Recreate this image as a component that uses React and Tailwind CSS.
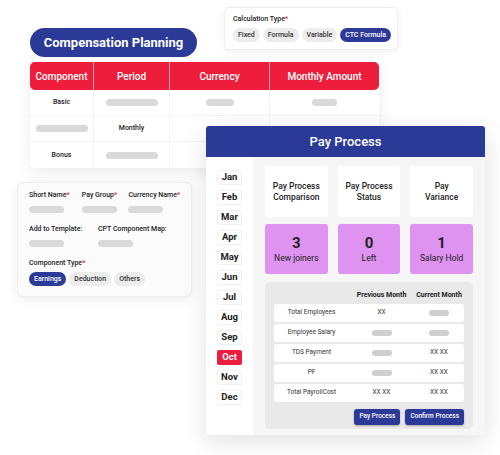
import React from "react";

const Bar = ({ w = "w-[52px]" }) => (
  <div className={`h-[7px] ${w} rounded-full bg-[#d9d9d9]`} />
);

const Chip = ({ children, active }) => (
  <div
    className={`h-[14px] px-[5px] rounded-full flex items-center whitespace-nowrap text-[7px] font-medium ${
      active ? "bg-[#2b3a97] text-white" : "bg-[#ececec] text-[#333]"
    }`}
  >
    {children}
  </div>
);

const Req = () => <span className="text-[#ee1d3c]">*</span>;

const months = ["Jan","Feb","Mar","Apr","May","Jun","Jul","Aug","Sep","Oct","Nov","Dec"];

export default function App() {
  return (
    <div
      className="relative w-[500px] h-[455px] bg-white overflow-hidden"
      style={{ fontFamily: "Roboto, 'Liberation Sans', sans-serif" }}
    >
      {/* Calculation type card */}
      <div className="absolute left-[224px] top-[7px] w-[174px] h-[43px] bg-white rounded-[5px] border border-[#eeeeee] shadow-[0_2px_8px_rgba(0,0,0,0.06)] px-[8px] pt-[8px]">
        <div className="text-[7px] font-medium text-[#222] leading-none whitespace-nowrap">
          Calculation Type<Req />
        </div>
        <div className="flex gap-[3px] mt-[5px]">
          <Chip>Fixed</Chip>
          <Chip>Formula</Chip>
          <Chip>Variable</Chip>
          <Chip active>CTC Formula</Chip>
        </div>
      </div>

      {/* Compensation table */}
      <div className="absolute left-[30px] top-[62px] w-[349px] bg-white rounded-[5px] shadow-[0_4px_16px_rgba(0,0,0,0.08)]">
        <div className="grid grid-cols-[64px_76px_100px_109px] h-[28px] bg-[#ee1d3c] rounded-[5px] text-white text-[10px] font-medium">
          <div className="flex items-center justify-center border-r border-white/60">Component</div>
          <div className="flex items-center justify-center border-r border-white/60">Period</div>
          <div className="flex items-center justify-center border-r border-white/60">Currency</div>
          <div className="flex items-center justify-center">Monthly Amount</div>
        </div>
        <div className="grid grid-cols-[64px_76px_100px_109px] text-[7px] font-medium text-[#222]">
          <div className="h-[26px] flex items-center justify-center border-r border-b border-[#f3f3f3]">Basic</div>
          <div className="h-[26px] flex items-center justify-center border-r border-b border-[#f3f3f3]"><Bar w="w-[52px]" /></div>
          <div className="h-[26px] flex items-center justify-center border-r border-b border-[#f3f3f3]"><Bar w="w-[28px]" /></div>
          <div className="h-[26px] flex items-center justify-center border-b border-[#f3f3f3]"><Bar w="w-[25px]" /></div>

          <div className="h-[26px] flex items-center justify-center border-r border-b border-[#f3f3f3]"><Bar w="w-[52px]" /></div>
          <div className="h-[26px] flex items-center justify-center border-r border-b border-[#f3f3f3]">Monthly</div>
          <div className="h-[26px] border-r border-b border-[#f3f3f3]" />
          <div className="h-[26px] border-b border-[#f3f3f3]" />

          <div className="h-[26px] flex items-center justify-center border-r border-[#f3f3f3]">Bonus</div>
          <div className="h-[26px] flex items-center justify-center border-r border-[#f3f3f3]"><Bar w="w-[52px]" /></div>
          <div className="h-[26px] border-r border-[#f3f3f3]" />
          <div className="h-[26px]" />
        </div>
      </div>

      {/* Compensation Planning pill */}
      <div className="absolute left-[30px] top-[28px] w-[167px] h-[29px] rounded-full bg-[#2b3a97] flex items-center justify-center text-white text-[13px] font-bold">
        Compensation Planning
      </div>

      {/* Left form card */}
      <div className="absolute left-[17px] top-[182px] w-[175px] h-[115px] bg-[#fbfbfb] rounded-[6px] border border-[#eeeeee] shadow-[0_2px_12px_rgba(0,0,0,0.07)] px-[11px] pt-[9px] text-[7px] font-medium text-[#222] whitespace-nowrap">
        <div className="flex">
          <div className="w-[53px]">
            <div className="leading-none">Short Name<Req /></div>
            <div className="mt-[7px]"><Bar w="w-[35px]" /></div>
          </div>
          <div className="w-[47px]">
            <div className="leading-none">Pay Group<Req /></div>
            <div className="mt-[7px]"><Bar w="w-[35px]" /></div>
          </div>
          <div>
            <div className="leading-none">Currency Name<Req /></div>
            <div className="mt-[7px]"><Bar w="w-[35px]" /></div>
          </div>
        </div>
        <div className="flex mt-[13px]">
          <div className="w-[69px]">
            <div className="leading-none">Add to Template:</div>
            <div className="mt-[7px]"><Bar w="w-[35px]" /></div>
          </div>
          <div>
            <div className="leading-none">CPT Component Map:</div>
            <div className="mt-[7px]"><Bar w="w-[35px]" /></div>
          </div>
        </div>
        <div className="mt-[13px] leading-none">Component Type<Req /></div>
        <div className="flex gap-[3px] mt-[5px]">
          <Chip active>Earnings</Chip>
          <Chip>Deduction</Chip>
          <Chip>Others</Chip>
        </div>
      </div>

      {/* Pay Process card */}
      <div className="absolute left-[206px] top-[126px] w-[279px] h-[309px] bg-white rounded-[3px] shadow-[0_6px_24px_rgba(0,0,0,0.12)] flex flex-col overflow-hidden">
        <div className="h-[31px] bg-[#2b3a97] flex items-center justify-center text-white text-[13px] font-medium shrink-0">
          Pay Process
        </div>
        <div className="flex flex-1">
          <div className="w-[48px] bg-white flex flex-col items-center pt-[13px] gap-[5px]">
            {months.map((m) => (
              <div
                key={m}
                className={`w-[25px] h-[15px] rounded-[2px] flex items-center justify-center text-[9.5px] font-bold ${
                  m === "Oct"
                    ? "bg-[#ee1d3c] text-white"
                    : "bg-white text-[#222] border border-[#f1f1f1]"
                }`}
              >
                {m}
              </div>
            ))}
          </div>
          <div className="flex-1 bg-[#f6f6f6] px-[12px] pt-[9px]">
            <div className="grid grid-cols-3 gap-x-[10px] gap-y-[7px]">
              {[["Pay Process", "Comparison"], ["Pay Process", "Status"], ["Pay", "Variance"]].map(([a, b]) => (
                <div key={b} className="h-[51px] bg-white rounded-[3px] flex flex-col items-center justify-center text-[8.5px] font-medium text-[#222] leading-[11px]">
                  <div>{a}</div>
                  <div>{b}</div>
                </div>
              ))}
              {[["3", "New joiners"], ["0", "Left"], ["1", "Salary Hold"]].map(([n, l]) => (
                <div key={l} className="h-[50px] bg-[#dd93ef] rounded-[3px] flex flex-col items-center justify-center text-[#222]">
                  <div className="text-[15px] font-bold leading-[17px]">{n}</div>
                  <div className="text-[8.5px] leading-[12px]">{l}</div>
                </div>
              ))}
            </div>
            <div className="mt-[8px] h-[147px] bg-[#e9e9e9] rounded-[5px] px-[9px] pt-[7px]">
              <div className="grid grid-cols-[75px_65px_50px] text-[7px] font-bold text-[#222] h-[12px] items-center whitespace-nowrap">
                <div />
                <div className="text-center">Previous Month</div>
                <div className="text-center">Current Month</div>
              </div>
              <div className="flex flex-col gap-[2px] mt-[3px]">
                {[
                  ["Total Employees", "XX", "bar"],
                  ["Employee Salary", "bar", "bar"],
                  ["TDS Payment", "bar", "XX XX"],
                  ["PF", "bar", "XX XX"],
                  ["Total PayrollCost", "XX XX", "XX XX"],
                ].map(([label, p, c]) => (
                  <div key={label} className="h-[18px] bg-white rounded-[3px] grid grid-cols-[75px_65px_50px] items-center text-[6.5px] text-[#333]">
                    <div className="text-center">{label}</div>
                    <div className="flex justify-center">{p === "bar" ? <div className="w-[20px] h-[6px] rounded-full bg-[#cfcfcf]" /> : p}</div>
                    <div className="flex justify-center">{c === "bar" ? <div className="w-[20px] h-[6px] rounded-full bg-[#cfcfcf]" /> : c}</div>
                  </div>
                ))}
              </div>
              <div className="flex justify-end gap-[5px] mt-[7px]">
                <div className="h-[16px] px-[5px] rounded-[3px] bg-[#2b3a97] text-white text-[6.5px] font-medium flex items-center whitespace-nowrap shadow-[0_1px_2px_rgba(0,0,0,0.3)]">Pay Process</div>
                <div className="h-[16px] px-[5px] rounded-[3px] bg-[#2b3a97] text-white text-[6.5px] font-medium flex items-center whitespace-nowrap shadow-[0_1px_2px_rgba(0,0,0,0.3)]">Confirm Process</div>
              </div>
            </div>
          </div>
        </div>
      </div>
    </div>
  );
}
